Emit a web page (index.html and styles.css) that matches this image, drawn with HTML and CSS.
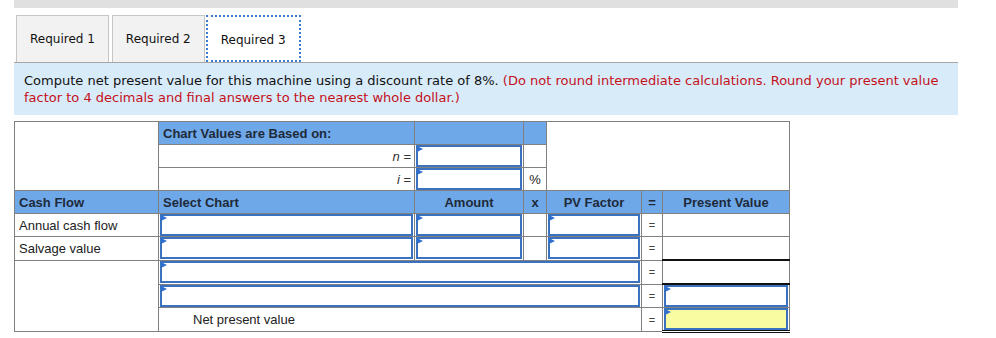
FILE: index.html
```html
<!DOCTYPE html>
<html lang="en">
<head>
  <meta charset="UTF-8">
  <title>Net Present Value</title>
  <link rel="stylesheet" href="styles.css">
</head>
<body>
  <div class="page">
    <div class="topbar"></div>

    <div class="tabs">
      <div class="tab">Required 1</div>
      <div class="tab">Required 2</div>
      <div class="tab active">Required 3</div>
    </div>

    <div class="question">
      Compute net present value for this machine using a discount rate of 8%.
      <span class="note">(Do not round intermediate calculations. Round your present value factor to 4 decimals and final answers to the nearest whole dollar.)</span>
    </div>

    <table class="npv">
      <colgroup>
        <col style="width:144px">
        <col style="width:256px">
        <col style="width:109px">
        <col style="width:23px">
        <col style="width:95px">
        <col style="width:21px">
        <col style="width:127px">
      </colgroup>
      <tr>
        <td rowspan="3"></td>
        <td class="head">Chart Values are Based on:</td>
        <td class="head"></td>
        <td class="head"></td>
        <td colspan="3" rowspan="3"></td>
      </tr>
      <tr>
        <td class="var"><i>n</i> =</td>
        <td><div class="field"></div></td>
        <td></td>
      </tr>
      <tr>
        <td class="var"><i>i</i> =</td>
        <td><div class="field"></div></td>
        <td class="mid">%</td>
      </tr>
      <tr>
        <td class="head">Cash Flow</td>
        <td class="head">Select Chart</td>
        <td class="head mid">Amount</td>
        <td class="head mid">x</td>
        <td class="head mid">PV Factor</td>
        <td class="head mid">=</td>
        <td class="head mid">Present Value</td>
      </tr>
      <tr>
        <td class="label">Annual cash flow</td>
        <td><div class="field"></div></td>
        <td><div class="field"></div></td>
        <td></td>
        <td><div class="field"></div></td>
        <td class="eq">=</td>
        <td></td>
      </tr>
      <tr>
        <td class="label">Salvage value</td>
        <td><div class="field"></div></td>
        <td><div class="field"></div></td>
        <td></td>
        <td><div class="field"></div></td>
        <td class="eq">=</td>
        <td class="total-top"></td>
      </tr>
      <tr>
        <td rowspan="3"></td>
        <td colspan="4"><div class="field"></div></td>
        <td class="eq">=</td>
        <td class="total-top"></td>
      </tr>
      <tr>
        <td colspan="4"><div class="field"></div></td>
        <td class="eq">=</td>
        <td><div class="field"></div></td>
      </tr>
      <tr>
        <td colspan="4" class="npv-label">Net present value</td>
        <td class="eq">=</td>
        <td class="grand"><div class="field yellow"></div></td>
      </tr>
    </table>
  </div>
</body>
</html>
```

FILE: styles.css
```css
body {
  margin: 0;
  background-color: #fff;
  color: #111;
}
.page {
  padding: 0 38px 0 14px;
}
.topbar {
  height: 8px;
  background-color: #e0e0e0;
}
.tabs {
  display: flex;
  gap: 3px;
  margin-top: 7px;
  padding-left: 2px;
  border-bottom: 1px solid #a6a6a6;
}
.tab {
  box-sizing: border-box;
  height: 47px;
  line-height: 47px;
  padding: 0 13px;
  background-color: #f2f2f2;
  border: 1px solid #c6c6c6;
  border-bottom: none;
  font-family: "DejaVu Sans", Verdana, sans-serif;
  font-size: 12px;
  color: #111;
}
.tab.active {
  background-color: #fff;
  border: 2px dotted #3a7bd5;
  margin-left: -2px;
  padding: 0 13px;
}
.question {
  background-color: #d8ebf9;
  padding: 9px 10px 9px 10px;
  font-family: "DejaVu Sans", Verdana, sans-serif;
  font-size: 13px;
  line-height: 17px;
  color: #111;
}
.question .note {
  color: #c4111b;
}
.npv {
  margin-top: 6px;
  border-collapse: collapse;
  table-layout: fixed;
  width: 775px;
  font-family: "Liberation Sans", Arial, sans-serif;
  font-size: 13px;
  color: #222;
}
.npv td {
  border: 1px solid #808080;
  height: 22px;
  padding: 0;
  vertical-align: middle;
}
.npv td.head {
  background-color: #6fa8e8;
  font-weight: bold;
  color: #1e2a3a;
  padding: 0 4px;
}
.npv td.mid {
  text-align: center;
}
.npv td.var {
  text-align: right;
  padding-right: 3px;
  color: #333;
}
.npv td.label {
  padding: 0 4px;
}
.npv td.eq {
  text-align: center;
  font-size: 11px;
  color: #444;
}
.npv td.npv-label {
  padding-left: 34px;
}
.npv td.total-top {
  border-bottom: 2px solid #111;
}
.npv td.grand {
  border-bottom: 3px double #111;
}
.field {
  position: relative;
  box-sizing: border-box;
  height: 22px;
  margin: 0 1px;
  border: 2px solid #3b72bf;
  background-color: #fff;
}
.field::before {
  content: "";
  position: absolute;
  left: -1px;
  top: -1px;
  border-top: 3px solid transparent;
  border-bottom: 3px solid transparent;
  border-left: 6px solid #2f6fd0;
}
.field.yellow {
  background-color: #fafca2;
}
```
